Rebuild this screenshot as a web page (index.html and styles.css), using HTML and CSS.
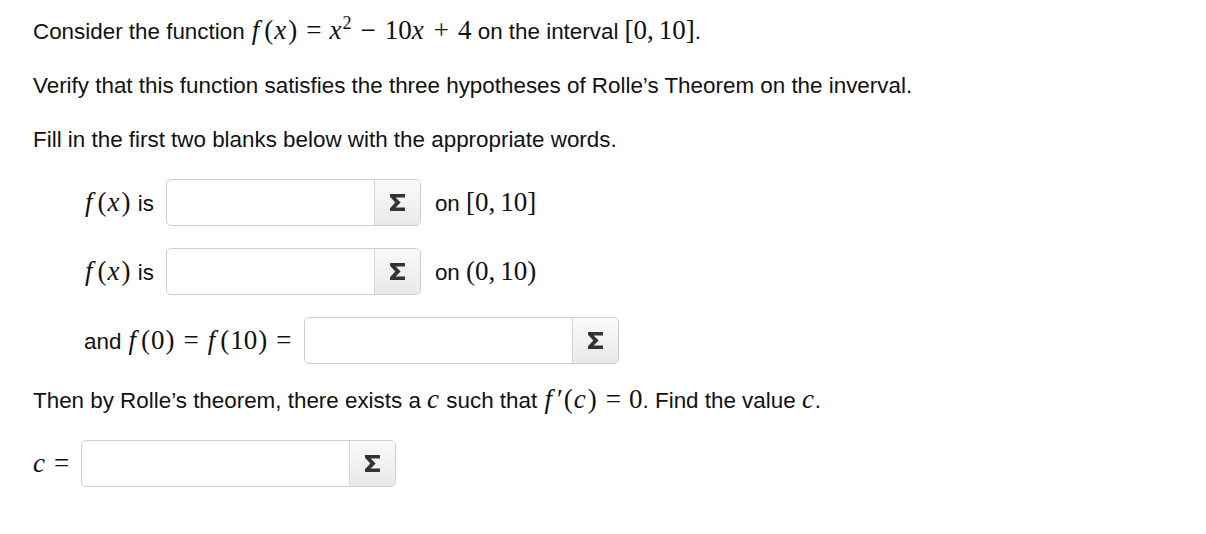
FILE: index.html
```html
<!DOCTYPE html>
<html>
<head>
<meta charset="utf-8">
<link rel="stylesheet" href="styles.css">
</head>
<body>
<div class="page">
  <p class="line">Consider the function <span class="m"><i class="f">f</i><span class="p">(</span><i>x</i><span class="p">)</span><span class="rel">=</span><i>x</i><sup>2</sup><span class="bin">−</span>10<i>x</i><span class="bin">+</span>4</span> on the interval <span class="m">[0,<span class="thin"></span>10]</span>.</p>
  <p class="line">Verify that this function satisfies the three hypotheses of Rolle’s Theorem on the inverval.</p>
  <p class="line">Fill in the first two blanks below with the appropriate words.</p>

  <div class="row indent">
    <span class="label"><span class="m"><i class="f">f</i><span class="p">(</span><i>x</i><span class="p">)</span></span> is</span>
    <div class="answer a-short">
      <div class="field"></div>
      <div class="btn"><svg class="sigma" width="15" height="17" viewBox="0 0 15 17"><polygon points="0,0 15,0 15,3.4 5.6,3.4 10.6,8.5 5.6,13.6 15,13.6 15,17 0,17 0,14.2 5.3,8.5 0,2.8" fill="#333"/></svg></div>
    </div>
    <span class="after">on <span class="m">[0,<span class="thin"></span>10]</span></span>
  </div>

  <div class="row indent">
    <span class="label"><span class="m"><i class="f">f</i><span class="p">(</span><i>x</i><span class="p">)</span></span> is</span>
    <div class="answer a-short">
      <div class="field"></div>
      <div class="btn"><svg class="sigma" width="15" height="17" viewBox="0 0 15 17"><polygon points="0,0 15,0 15,3.4 5.6,3.4 10.6,8.5 5.6,13.6 15,13.6 15,17 0,17 0,14.2 5.3,8.5 0,2.8" fill="#333"/></svg></div>
    </div>
    <span class="after">on <span class="m">(0,<span class="thin"></span>10)</span></span>
  </div>

  <div class="row indent">
    <span class="label">and <span class="m"><i class="f">f</i><span class="p">(</span>0<span class="p">)</span><span class="rel">=</span><i class="f">f</i><span class="p">(</span>10<span class="p">)</span><span class="rel end">=</span></span></span>
    <div class="answer a-long">
      <div class="field"></div>
      <div class="btn"><svg class="sigma" width="15" height="17" viewBox="0 0 15 17"><polygon points="0,0 15,0 15,3.4 5.6,3.4 10.6,8.5 5.6,13.6 15,13.6 15,17 0,17 0,14.2 5.3,8.5 0,2.8" fill="#333"/></svg></div>
    </div>
  </div>

  <p class="line then">Then by Rolle’s theorem, there exists a <span class="m"><i>c</i></span> such that <span class="m"><i class="f">f</i><span class="prime">′</span><span class="p">(</span><i>c</i><span class="p">)</span><span class="rel">=</span>0</span>. Find the value <span class="m"><i>c</i></span>.</p>

  <div class="row">
    <span class="label"><span class="m"><i>c</i><span class="rel end">=</span></span></span>
    <div class="answer a-long">
      <div class="field"></div>
      <div class="btn"><svg class="sigma" width="15" height="17" viewBox="0 0 15 17"><polygon points="0,0 15,0 15,3.4 5.6,3.4 10.6,8.5 5.6,13.6 15,13.6 15,17 0,17 0,14.2 5.3,8.5 0,2.8" fill="#333"/></svg></div>
    </div>
  </div>
</div>
</body>
</html>
```

FILE: styles.css
```css
html, body {
  margin: 0;
  padding: 0;
  background: #fff;
}

.page {
  padding: 17px 0 0 33px;
  font-family: "Liberation Sans", Arial, sans-serif;
  font-size: 22.4px;
  color: #111;
}

.line {
  margin: 0 0 24px 0;
  line-height: 30px;
  height: 30px;
  white-space: nowrap;
}

.m {
  font-family: "Liberation Serif", "Times New Roman", serif;
  font-size: 27px;
  line-height: 1;
  white-space: nowrap;
}

.m i {
  font-style: italic;
  padding-right: 1px;
}

.m i.f {
  padding: 0 4px 0 1px;
}

.p {
  margin: 0 1px;
}

.m sup {
  font-size: 18px;
  line-height: 0;
  vertical-align: 10px;
}

.rel {
  margin: 0 8px;
}

.rel.end {
  margin-right: 0;
}

.bin {
  margin: 0 9px;
}

.thin {
  display: inline-block;
  width: 5px;
}

.prime {
  margin-left: 1px;
}

.row {
  display: flex;
  align-items: center;
  height: 47px;
  margin-bottom: 22px;
}

.row.indent {
  padding-left: 51px;
}

.line + .row {
  margin-top: 1px;
}

.line.then {
  margin-top: 2px;
}

.label {
  margin-right: 12px;
  white-space: nowrap;
}

.after {
  margin-left: 14px;
  white-space: nowrap;
}

.answer {
  display: flex;
  height: 47px;
  box-sizing: border-box;
  border: 1px solid #cfcfcf;
  border-radius: 5px;
  overflow: hidden;
  background: #fff;
}

.field {
  flex: 1;
}

.a-short {
  width: 255px;
}

.a-long {
  width: 315px;
}

.btn {
  width: 45px;
  display: flex;
  align-items: center;
  justify-content: center;
  border-left: 1px solid #d6d6d6;
  background: linear-gradient(#fafafa, #e9e9e9);
}

.sigma {
  display: block;
}
```
